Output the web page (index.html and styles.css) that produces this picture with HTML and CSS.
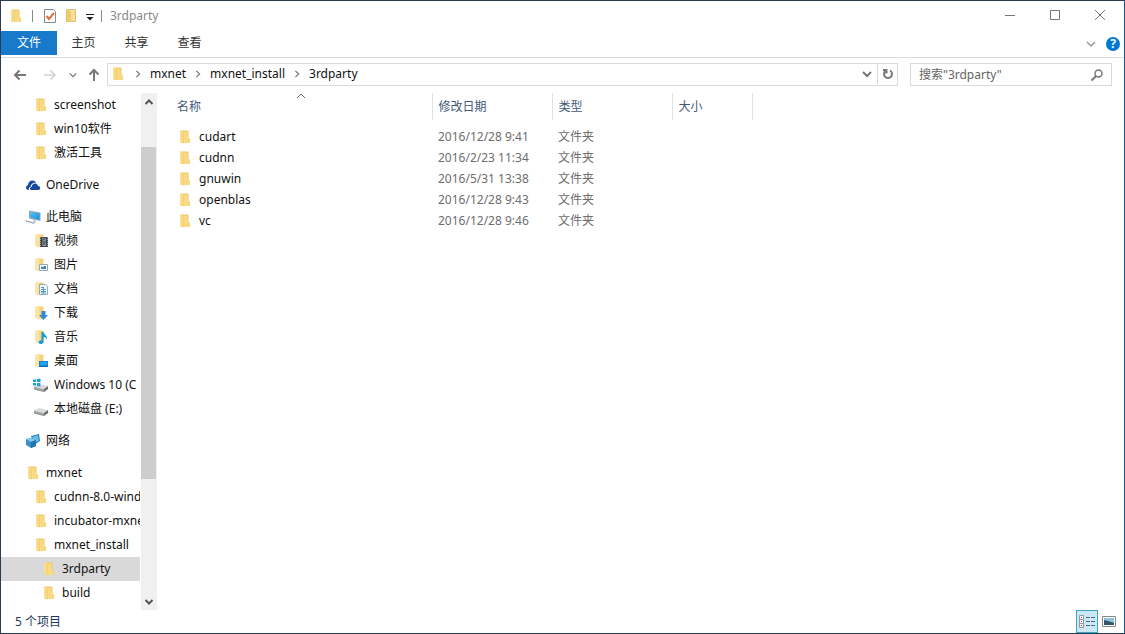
FILE: index.html
```html
<!DOCTYPE html>
<html lang="zh-CN">
<head>
<meta charset="utf-8">
<meta name="viewport" content="width=device-width, initial-scale=1">
<title>3rdparty</title>
<link rel="stylesheet" href="styles.css">
</head>
<body>
<svg class="sprite" aria-hidden="true">
  <defs>
    <linearGradient id="gold" x1="0" x2="1"><stop offset="0" stop-color="#fbe29a"/><stop offset="1" stop-color="#f5cf70"/></linearGradient>
    <linearGradient id="screen" x1="0" x2="1" y2="1"><stop offset="0" stop-color="#5fc0f3"/><stop offset="1" stop-color="#1d8fdc"/></linearGradient>
  </defs>
  <symbol id="folder" viewBox="0 0 16 16">
    <path fill="#f1c968" d="M3.500 1.500h8v7l1.500 1.500v4h-9.500z"/>
    <path fill="url(#gold)" d="M3 1.500l4 1V14.500L3 13z"/>
    <path fill="#f9da84" d="M7 2.500h3.500V8l2 2v4H7z"/>
  </symbol>
  <symbol id="half" viewBox="0 0 16 16">
    <path fill="#f6d27a" d="M2.500 1.500h8V14H7l-4.500-1z"/><path fill="#fbe4a2" d="M2.500 1.500l4 1V14l-4-1z"/>
  </symbol>
  <symbol id="cloud" viewBox="0 0 16 16">
    <path fill="#14499c" d="M1 10.500C1 9 2 8.200 3 8.200 3.200 5.500 5 3.500 7.300 3.500c1.800 0 3 .8 3.700 2.300-3.500-.3-5.500 2-5.300 4-1.700.3-2.300 1.800-1.800 3.200H3.300C2 13 1 12 1 10.500z"/>
    <path fill="#14499c" d="M5 11.500c0-1 .8-1.600 1.700-1.600C6.800 8 8.300 6.600 10 6.600c1.600 0 2.700 1 3 2.500 1.300 0 2.200.9 2.200 2 0 1.200-.9 1.900-2 1.900H6.500C5.600 13 5 12.300 5 11.500z"/>
  </symbol>
  <symbol id="pc" viewBox="0 0 16 16">
    <path fill="#8dabc0" d="M4 1.500l11.500 2v8.500L4 9.500z"/><path fill="url(#screen)" d="M5 2.700l9.500 1.600v6.400L5 8.800z"/>
    <path fill="#c1cbd2" d="M8 10.500l3 1v2l-3-1zM1 11l5 1.500 5 1-2 1.200L0 12z"/><path fill="#90a0aa" d="M1 12.500l8 2.200V14L1 11.800z"/>
  </symbol>
  <symbol id="video" viewBox="0 0 16 16">
    <use href="#half"/><path fill="#42464b" d="M7 4h8v10H7z"/><path stroke="#9ba1a7" stroke-dasharray="1 1" d="M7.500 4v10M14.500 4v10"/><path fill="#7e90a3" d="M9 5h4v3.500H9zM9 9.500h4V13H9z"/><path stroke="#42464b" d="M9 7.500l3-2M9 12l3-2"/>
  </symbol>
  <symbol id="picture" viewBox="0 0 16 16">
    <use href="#half"/><path fill="#fff" stroke="#92a7b7" d="M6.500 7.500h8v6h-8z"/><path fill="#4189c2" d="M8 9h5v3H8z"/><path fill="#b8dcf3" d="M8 9h3v1H8z"/>
  </symbol>
  <symbol id="document" viewBox="0 0 16 16">
    <use href="#half"/><path fill="#f5faff" stroke="#8eaaba" d="M6.500 3.500h6l2 2v8h-8z"/><path stroke="#529acb" d="M8 6.500h3M8 8.500h5M8 10.500h2M11 10.500h2M8 12h5M10.500 7v5"/>
  </symbol>
  <symbol id="download" viewBox="0 0 16 16">
    <use href="#half"/><path fill="#328bd5" d="M8.500 6h4v4H15l-4.500 5L6 10h2.500z"/>
  </symbol>
  <symbol id="music" viewBox="0 0 16 16">
    <use href="#half"/><path fill="#119ae0" d="M8.500 3h2c.2 2.500 4.500 3.500 3.500 8-.5-2-1.500-3-3.500-3v4.500C10.500 14 9.500 15 8 15s-2.300-.7-2.300-1.800c0-1.400 1.300-2.100 2.800-1.700z"/>
  </symbol>
  <symbol id="desktop" viewBox="0 0 16 16">
    <use href="#half"/><path fill="#1582cb" d="M6 8h9v6H6z"/><path fill="#24a4ed" d="M7 9h7v3H7z"/><path stroke="#1172b4" d="M6 13.500h9"/>
  </symbol>
  <symbol id="disk" viewBox="0 0 16 16">
    <path fill="#d9dadb" d="M1 9.500L6 7l9 2-4 3z"/><path fill="#aaa" d="M1 9.500L11 12v3L1 12z"/><path fill="#666b6e" d="M11 12l4-3v3l-4 3z"/><path fill="#909598" d="M1 11l10 3v1L1 12.500z"/>
  </symbol>
  <symbol id="windisk" viewBox="0 0 16 16">
    <use href="#disk"/><path fill="#fff" d="M0 1h8v8H0z"/><path fill="#18a5dc" d="M0 2.700l3-.5V5H0zM4 2l3.500-.6V5H4zM0 6h3v2.700l-3-.5zM4 6h3.500v3.400L4 8.900z"/>
  </symbol>
  <symbol id="network" viewBox="0 0 16 16">
    <path fill="#267dba" d="M6 3l8-2 1 7-6 4z"/><path fill="#68b8e8" d="M7 4l6-2 1 6-5 2z"/><path fill="#3b91ca" d="M1 6l5-1 5 2v6l-5 2-5-3z"/><path fill="#83c8ed" d="M1 6l5-1 5 2-5 2z"/><path fill="#2574ac" d="M6 9l5-2v6l-5 2z"/>
  </symbol>
  <symbol id="chev" viewBox="0 0 10 10"><path fill="none" stroke="currentColor" stroke-width="1.500" d="M1 3l4 4 4-4"/></symbol>
</svg>

<div class="window">
  <header class="titlebar">
    <svg class="icon"><use href="#folder"/></svg>
    <span class="rule rule-first"></span>
    <button class="tool tool-check" aria-label="属性"><svg class="icon" viewBox="0 0 16 16"><path fill="#fff" stroke="#858a8f" d="M2.500 1.500h9l2 2v11h-11z"/><path fill="none" stroke="#e2703a" stroke-width="2" d="M4.500 8l2.500 3 5-6"/></svg></button>
    <button class="tool" aria-label="新建文件夹"><svg class="icon" viewBox="0 0 16 16"><path fill="#fae09a" stroke="#d9be7c" d="M3.500 1.500h9v12h-9z"/><path fill="#f2cc6c" d="M4 2l4 1v11l-4-1z"/></svg></button>
    <button class="tool tool-more" aria-label="自定义"><svg class="tiny" viewBox="0 0 10 10"><path fill="#222" d="M1 3h8v1H1zM1.500 6h7L5 9.500z"/></svg></button>
    <span class="rule"></span>
    <h1 class="title">3rdparty</h1>
    <div class="controls">
      <button aria-label="最小化"><svg class="ctl" viewBox="0 0 11 11"><path stroke="#777" d="M0 5.500h10"/></svg></button>
      <button aria-label="最大化"><svg class="ctl" viewBox="0 0 11 11"><path fill="none" stroke="#777" d="M.5.5h9v9h-9z"/></svg></button>
      <button aria-label="关闭"><svg class="ctl" viewBox="0 0 11 11"><path stroke="#777" d="M0 0l10 10M10 0L0 10"/></svg></button>
    </div>
  </header>

  <nav class="ribbon">
    <button class="tab tab-file">文件</button>
    <button class="tab">主页</button>
    <button class="tab">共享</button>
    <button class="tab">查看</button>
    <div class="ribbon-end">
      <button class="expand" aria-label="展开功能区"><svg class="tiny"><use href="#chev"/></svg></button>
      <button class="help" aria-label="帮助">?</button>
    </div>
  </nav>

  <div class="addressbar">
    <div class="moves">
      <button aria-label="后退"><svg class="arrow" viewBox="0 0 14 14"><path fill="none" stroke="#777" stroke-width="2" d="M13 7H2M6.500 2.500L2 7l4.500 4.500"/></svg></button>
      <button aria-label="前进"><svg class="arrow" viewBox="0 0 14 14"><path fill="none" stroke="#d2d2d2" stroke-width="1.500" d="M1 7h11M7.500 2.500L12 7l-4.500 4.500"/></svg></button>
      <button class="recent" aria-label="最近浏览的位置"><svg class="micro"><use href="#chev"/></svg></button>
      <button aria-label="上移"><svg class="arrow" viewBox="0 0 14 14"><path fill="none" stroke="#777" stroke-width="2" d="M7 13V2M2.500 6.500L7 2l4.500 4.500"/></svg></button>
    </div>
    <div class="path">
      <svg class="icon"><use href="#folder"/></svg>
      <svg class="sep"><use href="#chev"/></svg><a href="#mxnet">mxnet</a>
      <svg class="sep"><use href="#chev"/></svg><a href="#mxnet_install">mxnet_install</a>
      <svg class="sep"><use href="#chev"/></svg><a href="#3rdparty">3rdparty</a>
      <button class="drop" aria-label="以前的位置"><svg class="tiny" viewBox="0 0 10 10"><path fill="none" stroke="#777" stroke-width="2" d="M1 3l4 4 4-4"/></svg></button>
      <button class="refresh" aria-label="刷新"><svg class="arrow" viewBox="0 0 14 14"><path fill="none" stroke="#777" stroke-width="2" d="M9 3.500A4 4 0 1 1 5 3.500M5.500 6.500V3H2"/></svg></button>
    </div>
    <form class="search">
      <input type="text" aria-label="搜索" placeholder='搜索"3rdparty"'>
      <button type="button" aria-label="搜索"><svg class="arrow" viewBox="0 0 14 14"><circle cx="8.500" cy="5.500" r="3.500" fill="none" stroke="#777" stroke-width="1.500"/><path stroke="#777" stroke-width="2" d="M6 8l-4.500 4.500"/></svg></button>
    </form>
  </div>

  <div class="main">
    <aside class="sidebar">
      <nav class="tree">
        <ul class="group">
          <li class="node deep"><svg class="icon"><use href="#folder"/></svg>screenshot</li>
          <li class="node deep"><svg class="icon"><use href="#folder"/></svg>win10软件</li>
          <li class="node deep"><svg class="icon"><use href="#folder"/></svg>激活工具</li>
        </ul>
        <ul class="group"><li class="node"><svg class="icon"><use href="#cloud"/></svg>OneDrive</li></ul>
        <ul class="group">
          <li class="node"><svg class="icon"><use href="#pc"/></svg>此电脑</li>
          <li class="node deep"><svg class="icon"><use href="#video"/></svg>视频</li>
          <li class="node deep"><svg class="icon"><use href="#picture"/></svg>图片</li>
          <li class="node deep"><svg class="icon"><use href="#document"/></svg>文档</li>
          <li class="node deep"><svg class="icon"><use href="#download"/></svg>下载</li>
          <li class="node deep"><svg class="icon"><use href="#music"/></svg>音乐</li>
          <li class="node deep"><svg class="icon"><use href="#desktop"/></svg>桌面</li>
          <li class="node deep"><svg class="icon"><use href="#windisk"/></svg>Windows 10 (C</li>
          <li class="node deep"><svg class="icon"><use href="#disk"/></svg>本地磁盘 (E:)</li>
        </ul>
        <ul class="group"><li class="node"><svg class="icon"><use href="#network"/></svg>网络</li></ul>
        <ul class="group">
          <li class="node"><svg class="icon"><use href="#folder"/></svg>mxnet</li>
          <li class="node deep"><svg class="icon"><use href="#folder"/></svg>cudnn-8.0-wind</li>
          <li class="node deep"><svg class="icon"><use href="#folder"/></svg>incubator-mxne</li>
          <li class="node deep"><svg class="icon"><use href="#folder"/></svg>mxnet_install</li>
          <li class="node deeper selected"><svg class="icon"><use href="#folder"/></svg>3rdparty</li>
          <li class="node deeper"><svg class="icon"><use href="#folder"/></svg>build</li>
        </ul>
      </nav>
      <div class="scrollbar">
        <button class="up" aria-label="向上滚动"><svg class="tiny" viewBox="0 0 10 10"><path fill="none" stroke="#555" stroke-width="2" d="M1.500 7L5 3.500 8.500 7"/></svg></button>
        <div class="track"><div class="thumb"></div></div>
        <button aria-label="向下滚动"><svg class="tiny" viewBox="0 0 10 10"><path fill="none" stroke="#555" stroke-width="2" d="M1.500 3L5 6.500 8.500 3"/></svg></button>
      </div>
    </aside>

    <main class="content">
      <table class="files">
        <colgroup><col class="c-name"><col class="c-date"><col class="c-type"><col class="c-size"></colgroup>
        <thead><tr><th>名称<svg class="sort" viewBox="0 0 10 10"><path fill="none" stroke="#666" d="M1 7l4-4 4 4"/></svg></th><th>修改日期</th><th>类型</th><th>大小</th></tr></thead>
        <tbody>
          <tr><td><div class="name"><svg class="icon"><use href="#folder"/></svg>cudart</div></td><td>2016/12/28 9:41</td><td>文件夹</td><td></td></tr>
          <tr><td><div class="name"><svg class="icon"><use href="#folder"/></svg>cudnn</div></td><td>2016/2/23 11:34</td><td>文件夹</td><td></td></tr>
          <tr><td><div class="name"><svg class="icon"><use href="#folder"/></svg>gnuwin</div></td><td>2016/5/31 13:38</td><td>文件夹</td><td></td></tr>
          <tr><td><div class="name"><svg class="icon"><use href="#folder"/></svg>openblas</div></td><td>2016/12/28 9:43</td><td>文件夹</td><td></td></tr>
          <tr><td><div class="name"><svg class="icon"><use href="#folder"/></svg>vc</div></td><td>2016/12/28 9:46</td><td>文件夹</td><td></td></tr>
        </tbody>
      </table>
    </main>
  </div>

  <footer class="status">
    <span>5 个项目</span>
    <div class="views">
      <button class="active" aria-label="详细信息"><svg class="view" viewBox="0 0 18 14"><path fill="#fff" stroke="#999" d="M1.500.5h4v4h-4zM1.500 4.500h4v4h-4zM1.500 8.500h4v4h-4z"/><path stroke="#c33" d="M3 2.500h1M3 6.500h1M3 10.500h1"/><path stroke="#476b7d" stroke-dasharray="4 1" d="M8 2.500h9M8 6.500h9M8 10.500h9"/></svg></button>
      <button aria-label="大图标"><svg class="view" viewBox="0 0 18 14"><path fill="#fff" stroke="#888" d="M2.500 1.500h13v10h-13z"/><path fill="#8fc1dc" d="M4 3h10v7H4z"/><path fill="#31566e" d="M4 5l4 1 6 2v2H4z"/></svg></button>
    </div>
  </footer>
</div>
</body>
</html>
```
FILE: styles.css
```css
* { box-sizing: border-box; }
body {
  margin: 0;
  font: 12px/20px "Noto Sans", "Noto Sans CJK SC", sans-serif;
  color: #111;
  background: #fff;
}
button {
  display: flex;
  align-items: center;
  justify-content: center;
  margin: 0;
  padding: 0;
  border: 0;
  background: none;
  font: inherit;
  color: inherit;
}
svg { display: block; flex: none; }
ul { margin: 0; padding: 0; list-style: none; }
a { color: inherit; text-decoration: none; }
.sprite { position: absolute; width: 0; height: 0; }
.icon { width: 16px; height: 16px; }
.tiny { width: 10px; height: 10px; }
.micro { width: 8px; height: 8px; }
.arrow { width: 14px; height: 14px; }
.ctl { width: 11px; height: 11px; }

.window {
  display: flex;
  flex-direction: column;
  height: 100vh;
  min-height: 320px;
  border: 1px solid #2b3c50;
  border-right-color: #1b5a8c;
}

.titlebar { display: flex; align-items: center; height: 30px; padding-left: 7px; }
.rule { width: 1px; height: 12px; background: #888; }
.rule-first { margin: 0 9px 0 8px; }
.tool { width: 16px; margin-right: 5px; }
.tool-more { width: 10px; margin: 0 6px 0 1px; }
.title { margin: 0 0 0 8px; font-size: 12px; font-weight: 400; color: #888; }
.controls { display: flex; align-self: stretch; margin-left: auto; padding: 0 1px 1px 0; }
.controls button { width: 45px; }

.ribbon { display: flex; height: 27px; border-bottom: 1px solid #dadbdc; }
.tab { width: 53px; height: 24px; color: #333; }
.tab-file { width: 56px; background: #1979ca; color: #fff; }
.ribbon-end { display: flex; align-items: center; gap: 10px; margin-left: auto; padding-right: 4px; }
.expand { color: #999; }
.help { width: 14px; height: 14px; border-radius: 50%; background: #0078d7; color: #fff; font-weight: 700; }

.addressbar { display: flex; align-items: center; height: 33px; padding-right: 12px; }
.moves { display: flex; align-items: center; width: 106px; padding: 0 6px 0 12px; }
.moves button + button { margin-left: 16px; }
.moves .recent { margin-left: 12px; color: #777; }
.moves .recent + button { margin-left: 10px; }
.path { display: flex; flex: 1; align-items: center; height: 23px; border: 1px solid #d9d9d9; padding: 0 0 1px 2px; }
.sep { width: 8px; height: 8px; margin: 0 8px; transform: rotate(-90deg); color: #777; }
.drop { width: 20px; margin-left: auto; }
.refresh { align-self: stretch; width: 20px; border-left: 1px solid #d9d9d9; }
.search { display: flex; width: 202px; height: 23px; margin-left: 12px; border: 1px solid #d9d9d9; }
.search input { flex: 1; min-width: 0; padding: 0 8px; border: 0; background: none; font: inherit; outline: 0; }
.search input::placeholder { color: #666; opacity: 1; }
.search button { width: 28px; }

.main { display: flex; flex: 1; min-height: 0; padding-top: 2px; }
.sidebar { display: flex; width: 156px; }
.tree { flex: 1; min-width: 0; overflow: hidden; }
.group + .group { margin-top: 8px; }
.node { display: flex; align-items: center; gap: 5px; height: 24px; padding-left: 24px; margin-right: 1px; overflow: hidden; white-space: nowrap; }
.deep { padding-left: 32px; }
.deeper { padding-left: 40px; }
.selected { background: #d9d9d9; }
.scrollbar { display: flex; flex-direction: column; width: 16px; background: #f0f0f0; }
.scrollbar button { height: 17px; }
.track { flex: 1; display: flex; flex-direction: column; }
.track::before { content: ""; flex: 37; }
.track::after { content: ""; flex: 114; }
.thumb { flex: 331; width: 15px; background: #cdcdcd; }

.content { flex: 1; min-width: 0; padding-left: 14px; overflow: hidden; }
.files { border-collapse: collapse; table-layout: fixed; width: 581px; }
.c-name { width: 261px; }
.c-date, .c-type { width: 120px; }
.c-size { width: 80px; }
.files th { position: relative; height: 27px; padding: 0 0 0 6px; border-right: 1px solid #e2e2e2; text-align: left; font-weight: 400; color: #44597a; }
.sort { position: absolute; top: -2px; left: 50%; width: 10px; height: 10px; margin-left: -5px; }
.files td { height: 21px; padding: 0 0 0 6px; line-height: 20px; color: #6d6d6d; white-space: nowrap; }
.files tbody::before { content: ""; display: table-row; height: 6px; }
.name { display: flex; align-items: center; gap: 6px; color: #111; }

.status { display: flex; justify-content: space-between; align-items: center; height: 23px; padding-left: 14px; color: #1e395b; }
.views { display: flex; align-self: stretch; margin-right: 4px; }
.views button { width: 22px; }
.views .active { border: 1px solid #3aa5c0; background: #cce8f4; }
.view { width: 18px; height: 14px; }
```
